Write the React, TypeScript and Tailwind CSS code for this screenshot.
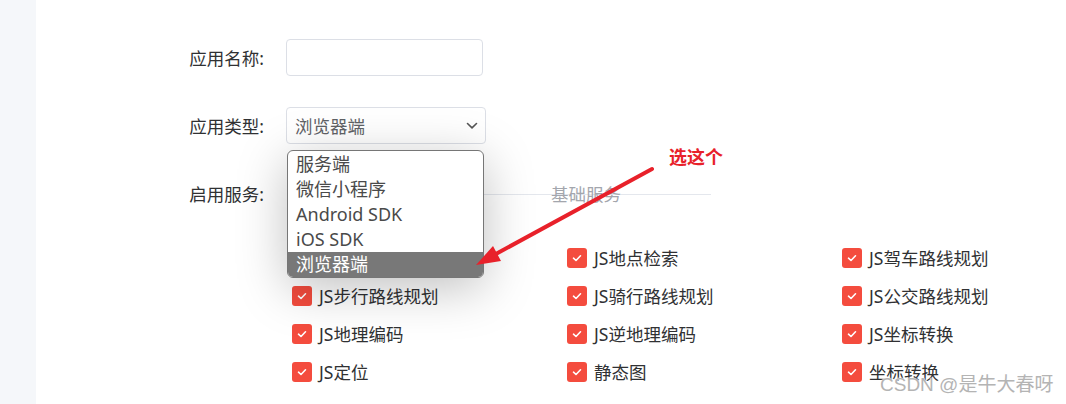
import React from 'react';

const font = "font-['Noto_Sans','Noto_Sans_CJK_SC',sans-serif]";

// first cell sits under the open select popup, so it stays empty
const services: (string | null)[] = [
  null,
  'JS地点检索',
  'JS驾车路线规划',
  'JS步行路线规划',
  'JS骑行路线规划',
  'JS公交路线规划',
  'JS地理编码',
  'JS逆地理编码',
  'JS坐标转换',
  'JS定位',
  '静态图',
  '坐标转换',
];

const appTypes = ['服务端', '微信小程序', 'Android SDK', 'iOS SDK', '浏览器端'];

const Check: React.FC<{ label: string }> = ({ label }) => (
  <div className="flex h-[20px] items-center gap-[7px]">
    <span className="flex h-[20px] w-[20px] items-center justify-center rounded-[3px] bg-[#f44c3e]">
      <svg width="12" height="12" viewBox="0 0 12 12" fill="none">
        <path d="M2.5 6.2 5 8.5 9.5 3.8" stroke="white" strokeWidth="1.6" strokeLinecap="round" strokeLinejoin="round" />
      </svg>
    </span>
    <span className="text-[17.5px] leading-[20px] text-[#303133]">{label}</span>
  </div>
);

const Label: React.FC<{ children: React.ReactNode }> = ({ children }) => (
  <div className="w-[250px] shrink-0 pr-[22px] text-right text-[17.5px] leading-[24px] text-[#303133]">{children}</div>
);

export default function App() {
  return (
    <div className={`relative flex h-[404px] w-[1066px] overflow-hidden bg-white ${font}`}>
      <aside className="h-full w-[36px] shrink-0 bg-[#f5f7fa]" />

      <main className="flex flex-col pt-[39px]">
        <div className="flex items-center">
          <Label>应用名称:</Label>
          <div className="h-[37px] w-[197px] rounded-[4px] border border-[#dcdfe6] bg-white" />
        </div>

        <div className="mt-[31px] flex items-center">
          <Label>应用类型:</Label>
          <div className="flex h-[37px] w-[200px] items-center justify-between rounded-[4px] border border-[#dcdfe6] bg-white pl-[8px] pr-[7px]">
            <span className="text-[17.5px] leading-[24px] text-[#606266]">浏览器端</span>
            <svg width="12" height="8" viewBox="0 0 12 8" fill="none">
              <path d="M1.5 1.5 6 5.8 10.5 1.5" stroke="#555" strokeWidth="1.6" strokeLinecap="round" strokeLinejoin="round" />
            </svg>
          </div>
        </div>

        <div className="mt-[38px] flex items-center">
          <Label>启用服务:</Label>
          <div className="relative ml-[175px] h-px w-[250px] bg-[#e4e7ed]">
            <span className="absolute left-1/2 top-1/2 -translate-x-1/2 -translate-y-1/2 whitespace-nowrap text-[17.5px] leading-[24px] text-[#a3a6ad]">
              基础服务
            </span>
          </div>
        </div>

        <div className="ml-[256px] mt-[42px] grid grid-cols-[275px_275px_200px] gap-y-[18px]">
          {services.map((s, i) => (s ? <Check key={s} label={s} /> : <div key={i} className="h-[20px]" />))}
        </div>
      </main>

      {/* native select popup */}
      <div className="absolute left-[287px] top-[150px] w-[197px] overflow-hidden rounded-[6px] border border-[#767676] bg-white pt-px shadow-[0_10px_50px_rgba(0,0,0,0.25)]">
        {appTypes.map((t, i) => (
          <div
            key={t}
            className={`h-[25px] px-[8px] text-[18px] leading-[25px] ${
              i === appTypes.length - 1 ? 'bg-[#787878] text-white' : 'text-[#4a4a4a]'
            }`}
          >
            {t}
          </div>
        ))}
      </div>

      {/* annotation */}
      <svg className="pointer-events-none absolute left-0 top-0" width="1066" height="404">
        <line x1="652" y1="169" x2="494" y2="255" stroke="#e8212a" strokeWidth="4" strokeLinecap="round" />
        <polygon points="476,265 493,246 501,261" fill="#e8212a" />
      </svg>
      <span className="absolute left-[669px] top-[145px] text-[18px] font-bold leading-[24px] text-[#e8212a]">选这个</span>

      <span className="absolute left-[880px] top-[372px] whitespace-nowrap text-[19px] leading-[24px] text-[#b4b4b4] [text-shadow:0_0_2px_#fff,0_0_1px_#fff]">
        <span className="font-['Liberation_Sans',sans-serif]">CSDN @</span>是牛大春呀
      </span>
    </div>
  );
}
